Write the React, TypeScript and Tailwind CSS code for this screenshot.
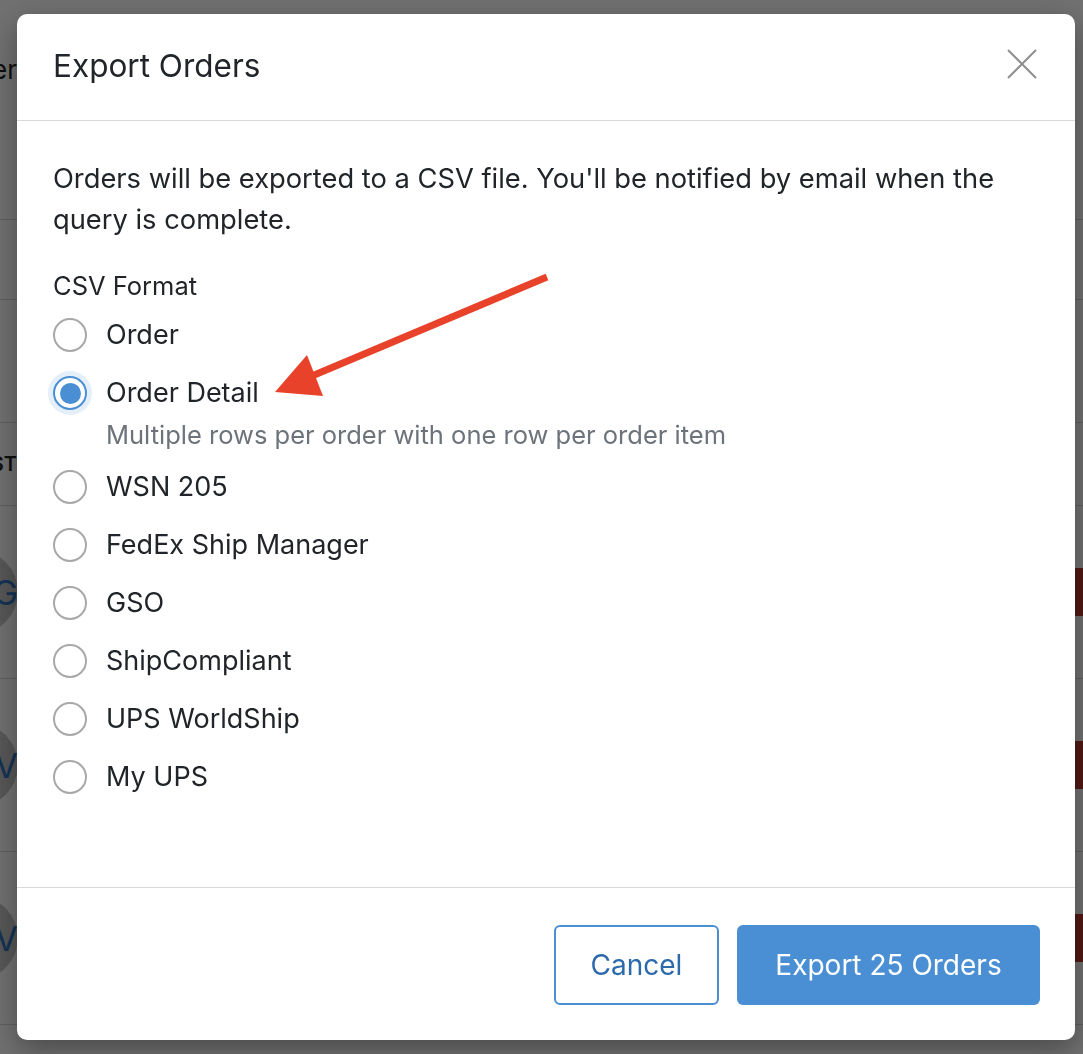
import { useState } from 'react';

const formats = [
  { id: 'order', label: 'Order' },
  { id: 'detail', label: 'Order Detail', help: 'Multiple rows per order with one row per order item' },
  { id: 'wsn', label: 'WSN 205' },
  { id: 'fedex', label: 'FedEx Ship Manager' },
  { id: 'gso', label: 'GSO' },
  { id: 'shipcompliant', label: 'ShipCompliant' },
  { id: 'ups', label: 'UPS WorldShip' },
  { id: 'myups', label: 'My UPS' },
];

function BackgroundPage() {
  return (
    <div className="h-screen overflow-hidden bg-white flex flex-col">
      <div className="h-[220px] border-b border-[#d6d6d6] flex">
        <div className="w-[17px] overflow-hidden flex justify-end pt-[50px] text-[26px] text-[#222]">Order</div>
      </div>
      <div className="h-[80px] border-b border-[#d6d6d6]" />
      <div className="h-[123px] border-b border-[#d6d6d6]" />
      <div className="h-[83px] border-b border-[#d6d6d6] flex items-center">
        <div className="w-[17px] overflow-hidden flex justify-end text-[20px] font-semibold text-[#222]">LIST</div>
      </div>
      {['G', 'V', 'V'].map((letter, i) => (
        <div key={i} className="h-[173px] border-b border-[#d6d6d6] flex items-center justify-between">
          <div className="-ml-[66px] w-[84px] h-[84px] rounded-full bg-[#c6c6c6] flex items-center justify-end text-[34px] text-[#2f74c0]">
            {letter}
          </div>
          <div className="w-[60px] h-[48px] bg-[#b53a30] text-white text-[22px] flex items-center pl-[6px]">nd</div>
        </div>
      ))}
    </div>
  );
}

export default function App() {
  const [selected, setSelected] = useState('detail');

  return (
    <div className="relative h-screen overflow-hidden" style={{ fontFamily: 'Inter, "Noto Sans", sans-serif' }}>
      <BackgroundPage />

      <div className="fixed inset-0 bg-black/[0.56] pt-[14px] pl-[17px]">
        <div className="w-[1058px] h-[1026px] bg-white rounded-[10px] shadow-[0_10px_30px_rgba(0,0,0,0.35)] flex flex-col text-[#212529]">
          <div className="h-[107px] shrink-0 flex items-center justify-between pl-[36px] pr-[38px] border-b border-[#d9d9d9]">
            <h5 className="text-[31.5px] leading-none -mt-[2px]">Export Orders</h5>
            <button className="-mt-[6px] text-[#8f8f8f]">
              <svg width="30" height="30" viewBox="0 0 30 30" fill="none" stroke="currentColor" strokeWidth="2">
                <path d="M1 1L29 29M29 1L1 29" />
              </svg>
            </button>
          </div>

          <div className="flex-1 px-[36px] pt-[37px]">
            <p className="text-[27.3px] leading-[41px] mb-[26px]">
              Orders will be exported to a CSV file. You'll be notified by email when the query is complete.
            </p>
            <div className="h-[40px] flex items-center text-[25.5px]">CSV Format</div>
            {formats.map((f) => {
              const on = selected === f.id;
              return (
                <div key={f.id}>
                  <label className="h-[58px] flex items-center gap-[19px] cursor-pointer" onClick={() => setSelected(f.id)}>
                    <span
                      className={
                        on
                          ? 'w-[34px] h-[34px] rounded-full border-2 border-[#4a8fd4] bg-white flex items-center justify-center shadow-[0_0_0_5px_#e5effa]'
                          : 'w-[34px] h-[34px] rounded-full border-2 border-[#a8a8a8] bg-white'
                      }
                    >
                      {on && <span className="w-[21px] h-[21px] rounded-full bg-[#4a8fd4]" />}
                    </span>
                    <span className="text-[27px]">{f.label}</span>
                  </label>
                  {f.help && (
                    <div className="pl-[53px] leading-[26px] pb-[10px] text-[25.5px] text-[#6c737b]">{f.help}</div>
                  )}
                </div>
              );
            })}
          </div>

          <div className="shrink-0 border-t border-[#d9d9d9] pt-[37px] pb-[35px] pr-[35px] flex justify-end gap-[18px]">
            <button className="w-[165px] h-[80px] rounded-[6px] border-2 border-[#4a8fd4] text-[#2d6aab] text-[28px]">
              Cancel
            </button>
            <button className="w-[303px] h-[80px] rounded-[6px] bg-[#4a8fd3] text-white text-[28px]">
              Export 25 Orders
            </button>
          </div>
        </div>
      </div>

      <svg className="fixed inset-0 pointer-events-none" width="1083" height="1054">
        <line x1="547" y1="277" x2="300" y2="381" stroke="#e8432a" strokeWidth="7" />
        <polygon points="275,392 307,355 323,396" fill="#e8432a" />
      </svg>
    </div>
  );
}
